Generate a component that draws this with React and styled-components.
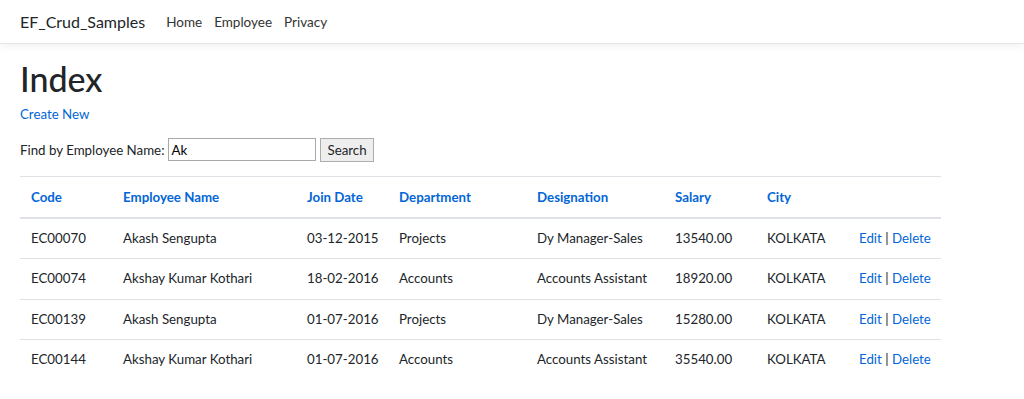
import styled, { createGlobalStyle } from "styled-components";

const GlobalStyle = createGlobalStyle`
  html, body {
    margin: 0;
    padding: 0;
    background: #fff;
  }
  body {
    font-family: Lato, "Open Sans", "Liberation Sans", sans-serif;
    color: #212529;
    font-size: 13.3px;
  }
`;

const employees = [
  { code: "EC00070", name: "Akash Sengupta", join: "03-12-2015", dept: "Projects", desig: "Dy Manager-Sales", salary: "13540.00", city: "KOLKATA" },
  { code: "EC00074", name: "Akshay Kumar Kothari", join: "18-02-2016", dept: "Accounts", desig: "Accounts Assistant", salary: "18920.00", city: "KOLKATA" },
  { code: "EC00139", name: "Akash Sengupta", join: "01-07-2016", dept: "Projects", desig: "Dy Manager-Sales", salary: "15280.00", city: "KOLKATA" },
  { code: "EC00144", name: "Akshay Kumar Kothari", join: "01-07-2016", dept: "Accounts", desig: "Accounts Assistant", salary: "35540.00", city: "KOLKATA" },
];

const columns = [
  { label: "Code", width: 92 },
  { label: "Employee Name", width: 184 },
  { label: "Join Date", width: 92 },
  { label: "Department", width: 138 },
  { label: "Designation", width: 138 },
  { label: "Salary", width: 92 },
  { label: "City", width: 92 },
  { label: "", width: 93 },
];

const App = () => {
  return (
    <>
      <GlobalStyle />
      <Navbar>
        <Brand href="#">EF_Crud_Samples</Brand>
        <NavList>
          <NavLink href="#">Home</NavLink>
          <NavLink href="#">Employee</NavLink>
          <NavLink href="#">Privacy</NavLink>
        </NavList>
      </Navbar>
      <Main>
        <Title>Index</Title>
        <CreateLink href="#">Create New</CreateLink>
        <SearchForm onSubmit={(e) => e.preventDefault()}>
          <label htmlFor="find">Find by Employee Name:</label>
          <SearchInput id="find" defaultValue="Ak" />
          <SearchButton type="submit">Search</SearchButton>
        </SearchForm>
        <Table>
          <colgroup>
            {columns.map((c, i) => (
              <col key={i} style={{ width: c.width }} />
            ))}
          </colgroup>
          <thead>
            <tr>
              {columns.map((c, i) => (
                <Th key={i}>{c.label && <SortLink href="#">{c.label}</SortLink>}</Th>
              ))}
            </tr>
          </thead>
          <tbody>
            {employees.map((emp) => (
              <tr key={emp.code}>
                <Td>{emp.code}</Td>
                <Td>{emp.name}</Td>
                <Td>{emp.join}</Td>
                <Td>{emp.dept}</Td>
                <Td>{emp.desig}</Td>
                <Td>{emp.salary}</Td>
                <Td>{emp.city}</Td>
                <Td>
                  <ActionLink href="#">Edit</ActionLink> |{" "}
                  <ActionLink href="#">Delete</ActionLink>
                </Td>
              </tr>
            ))}
          </tbody>
        </Table>
      </Main>
    </>
  );
};

const Navbar = styled.nav`
  display: flex;
  align-items: center;
  height: 43px;
  padding: 0 20px;
  border-bottom: 1px solid #e5e5e5;
  box-shadow: 0 3px 8px rgba(0, 0, 0, 0.05);
`;

const Brand = styled.a`
  font-size: 16px;
  color: #212529;
  text-decoration: none;
  margin-right: 15px;
`;

const NavList = styled.div`
  display: flex;
`;

const NavLink = styled.a`
  font-size: 13.5px;
  color: #333;
  text-decoration: none;
  padding: 0 6px;
`;

const Main = styled.main`
  padding: 0 20px;
`;

const Title = styled.h1`
  font-size: 34px;
  font-weight: 500;
  margin: 15px 0 0;
  line-height: 1.2;
`;

const CreateLink = styled.a`
  display: inline-block;
  margin-top: 6px;
  color: #0366d6;
  text-decoration: none;
`;

const SearchForm = styled.form`
  display: flex;
  align-items: center;
  margin-top: 16px;

  label {
    margin-right: 4px;
  }
`;

const SearchInput = styled.input`
  width: 142px;
  height: 19px;
  border: 1px solid #a9a9a9;
  padding: 1px 2px;
  font-family: inherit;
  font-size: 13.3px;
  margin-right: 4px;
`;

const SearchButton = styled.button`
  height: 24px;
  padding: 0 6px;
  border: 1px solid #adadad;
  background: #eee;
  font-family: inherit;
  font-size: 13.3px;
  color: #212529;
`;

const Table = styled.table`
  width: 921px;
  table-layout: fixed;
  border-collapse: collapse;
  margin-top: 14px;
`;

const Th = styled.th`
  text-align: left;
  padding: 10px 11px;
  line-height: 20px;
  border-top: 1px solid #dee2e6;
  border-bottom: 2px solid #dee2e6;
  font-weight: 700;
`;

const SortLink = styled.a`
  color: #0366d6;
  text-decoration: none;
`;

const Td = styled.td`
  padding: 10px 11px;
  line-height: 19.5px;
  border-top: 1px solid #dee2e6;
  white-space: nowrap;
`;

const ActionLink = styled.a`
  color: #0366d6;
  text-decoration: none;
`;

export default App;
